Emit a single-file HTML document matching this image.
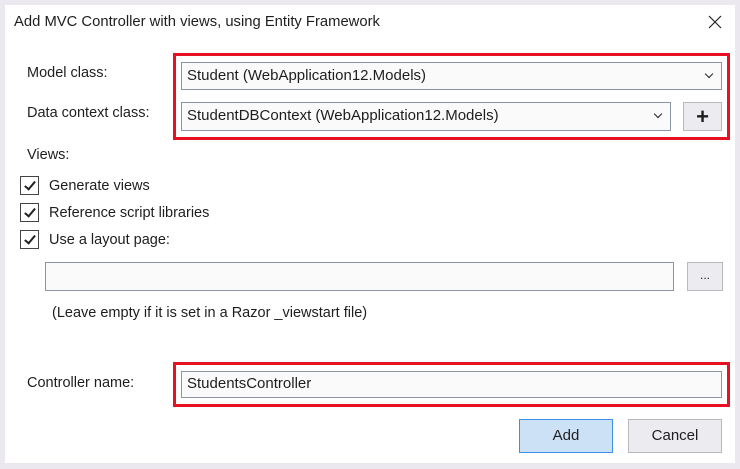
<!DOCTYPE html>
<html><head><style>
body{margin:0;width:740px;height:469px;background:#ebe9ef;font-family:"Liberation Sans",sans-serif;font-size:14.5px;color:#1e1e1e;position:relative;overflow:hidden}
.dlg{position:absolute;left:5px;top:5px;width:730px;height:458px;background:#fff}
.a{position:absolute;white-space:nowrap}
.box{position:absolute;background:#fafafa;border:1px solid #8a96a8;box-sizing:border-box}
.red{position:absolute;border:3px solid #e81123;box-sizing:border-box}
.btn{position:absolute;background:#ecebf0;border:1px solid #b8b8bd;box-sizing:border-box;text-align:center}
.cb{position:absolute;left:20px;width:19px;height:19px;border:1px solid #444;box-sizing:border-box;background:#fff}
.cb:after{content:"";position:absolute;left:6px;top:2px;width:4px;height:9px;border:solid #222;border-width:0 2px 2px 0;transform:rotate(40deg)}
.chev{position:absolute;width:5px;height:5px;border:solid #222;border-width:0 1.5px 1.5px 0;transform:rotate(45deg)}
</style></head><body>
<div class="dlg"></div>
<div class="a" style="left:14px;top:14px;font-size:14.8px">Add MVC Controller with views, using Entity Framework</div>
<svg class="a" style="left:708px;top:15px" width="14" height="14"><path d="M1 1L13 13M13 1L1 13" stroke="#222" stroke-width="1.2"/></svg>
<div class="a" style="left:27px;top:65px">Model class:</div>
<div class="a" style="left:27px;top:105px">Data context class:</div>
<div class="a" style="left:27px;top:147px">Views:</div>
<div class="red" style="left:173px;top:53px;width:557px;height:87px"></div>
<div class="box" style="left:181px;top:62px;width:541px;height:28px"></div>
<div class="a" style="left:187px;top:67px;font-size:15px">Student (WebApplication12.Models)</div>
<div class="chev" style="left:706px;top:71px"></div>
<div class="box" style="left:181px;top:102px;width:490px;height:29px"></div>
<div class="a" style="left:187px;top:107px;font-size:15px">StudentDBContext (WebApplication12.Models)</div>
<div class="chev" style="left:655px;top:111px"></div>
<div class="btn" style="left:683px;top:102px;width:39px;height:29px;font-size:22px;line-height:27px;font-weight:bold">+</div>
<div class="cb" style="top:176px"></div><div class="a" style="left:49px;top:178px">Generate views</div>
<div class="cb" style="top:203px"></div><div class="a" style="left:49px;top:205px">Reference script libraries</div>
<div class="cb" style="top:230px"></div><div class="a" style="left:49px;top:232px">Use a layout page:</div>
<div class="box" style="left:45px;top:262px;width:629px;height:29px"></div>
<div class="btn" style="left:687px;top:262px;width:36px;height:29px;line-height:24px;font-size:12px">...</div>
<div class="a" style="left:52px;top:305px">(Leave empty if it is set in a Razor _viewstart file)</div>
<div class="a" style="left:27px;top:375px">Controller name:</div>
<div class="red" style="left:173px;top:362px;width:557px;height:45px"></div>
<div class="box" style="left:181px;top:371px;width:541px;height:27px"></div>
<div class="a" style="left:187px;top:375px;font-size:15px">StudentsController</div>
<div class="btn" style="left:519px;top:419px;width:94px;height:34px;line-height:32px;background:#cce0f6;border-color:#3d8ee6;font-size:15px">Add</div>
<div class="btn" style="left:628px;top:419px;width:94px;height:34px;line-height:32px;font-size:15px">Cancel</div>
</body></html>
